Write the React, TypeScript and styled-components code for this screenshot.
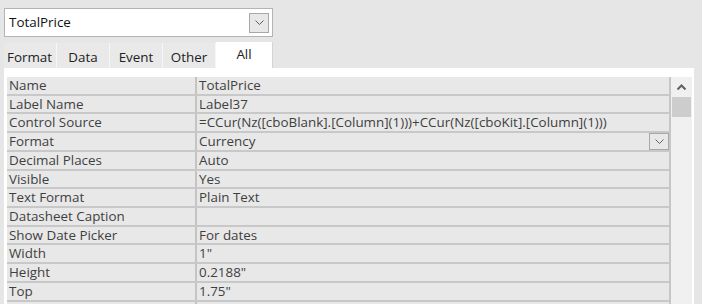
import React from "react";
import styled, { createGlobalStyle } from "styled-components";

const GlobalStyle = createGlobalStyle`
  html, body {
    margin: 0;
    padding: 0;
    height: 304px;
    overflow: hidden;
    background: #e6e6e6;
  }
  body {
    font-family: "Open Sans", "Noto Sans", sans-serif;
    font-size: 13.4px;
    color: #3f3f3f;
  }
`;

const rows: { label: string; value: string; dropdown?: boolean }[] = [
  { label: "Name", value: "TotalPrice" },
  { label: "Label Name", value: "Label37" },
  {
    label: "Control Source",
    value: "=CCur(Nz([cboBlank].[Column](1)))+CCur(Nz([cboKit].[Column](1)))",
  },
  { label: "Format", value: "Currency", dropdown: true },
  { label: "Decimal Places", value: "Auto" },
  { label: "Visible", value: "Yes" },
  { label: "Text Format", value: "Plain Text" },
  { label: "Datasheet Caption", value: "" },
  { label: "Show Date Picker", value: "For dates" },
  { label: "Width", value: "1\"" },
  { label: "Height", value: "0.2188\"" },
  { label: "Top", value: "1.75\"" },
  { label: "", value: "" },
];

const tabs = ["Format", "Data", "Event", "Other", "All"];

const Chevron = ({ up }: { up?: boolean }) => (
  <svg width="9" height="6" viewBox="0 0 9 6">
    <path
      d={up ? "M0.5 5.5 L4.5 1.5 L8.5 5.5" : "M0.5 0.5 L4.5 4.5 L8.5 0.5"}
      fill="none"
      stroke="#606060"
      strokeWidth={up ? 2 : 1}
    />
  </svg>
);

const App = () => {
  return (
    <>
      <GlobalStyle />
      <Sheet>
        <Combo>
          <ComboText>TotalPrice</ComboText>
          <DropButton $w={20} $h={20}>
            <Chevron />
          </DropButton>
        </Combo>
        <TabStrip>
          {tabs.map((t) => (
            <Tab key={t} $active={t === "All"}>
              {t}
            </Tab>
          ))}
        </TabStrip>
        <Panel>
          <Grid>
            {rows.map((r, i) => (
              <Row key={i}>
                <LabelCell>{r.label}</LabelCell>
                <ValueCell>
                  <span>{r.value}</span>
                  {r.dropdown && (
                    <DropButton $w={20} $h={17}>
                      <Chevron />
                    </DropButton>
                  )}
                </ValueCell>
              </Row>
            ))}
          </Grid>
          <ScrollBar>
            <ScrollArrow>
              <Chevron up />
            </ScrollArrow>
            <Thumb />
          </ScrollBar>
        </Panel>
      </Sheet>
    </>
  );
};

const Sheet = styled.div`
  padding: 8px 8px 0 4px;
  display: flex;
  flex-direction: column;
`;

const Combo = styled.div`
  box-sizing: border-box;
  width: 269px;
  height: 29px;
  background: #fff;
  border: 1px solid #b4b4b4;
  display: flex;
  align-items: center;
  justify-content: space-between;
  padding: 0 3px 0 4px;
  color: #111;
  font-size: 13.4px;
`;

const ComboText = styled.span`
  padding-bottom: 1px;
`;

const DropButton = styled.div<{ $w: number; $h: number }>`
  box-sizing: border-box;
  width: ${(p) => p.$w}px;
  height: ${(p) => p.$h}px;
  border: 1px solid #a8a8a8;
  background: #e8e8e8;
  display: flex;
  align-items: center;
  justify-content: center;
  flex-shrink: 0;
`;

const TabStrip = styled.div`
  display: flex;
  align-items: flex-end;
  margin-top: 5px;
  height: 26px;
`;

const Tab = styled.div<{ $active?: boolean }>`
  box-sizing: border-box;
  width: ${(p) => (p.$active ? 57 : 53)}px;
  height: ${(p) => (p.$active ? 26 : 25)}px;
  display: flex;
  align-items: ${(p) => (p.$active ? "flex-start" : "center")};
  justify-content: center;
  padding-top: ${(p) => (p.$active ? 3 : 2)}px;
  background: ${(p) => (p.$active ? "#fff" : "#e9e9e9")};
  border-right: 1px solid ${(p) => (p.$active ? "#d4d4d4" : "#f6f6f6")};
  color: #222;
  font-size: 13.4px;

  &:first-child {
    justify-content: flex-start;
    padding-left: 3px;
  }
`;

const Panel = styled.div`
  box-sizing: border-box;
  width: 690px;
  height: 236px;
  background: #fff;
  padding: 9px 2px 0 3px;
  display: flex;
  align-items: flex-start;
  overflow: hidden;
`;

const Grid = styled.div`
  flex: 1;
  display: flex;
  flex-direction: column;
  border-right: 2px solid #c6c6c6;
`;

const Row = styled.div`
  box-sizing: border-box;
  height: 18.73px;
  flex-shrink: 0;
  display: grid;
  grid-template-columns: 190px 1fr;
  background: #e8e8e8;
  border-bottom: 2px solid #c8c8c8;
`;

const LabelCell = styled.div`
  padding-left: 2px;
  line-height: 17px;
  border-right: 2px solid #c4c4c4;
  white-space: nowrap;
`;

const ValueCell = styled.div`
  display: flex;
  align-items: flex-start;
  justify-content: space-between;
  padding-left: 2px;
  line-height: 17px;
  white-space: nowrap;
  overflow: hidden;
`;

const ScrollBar = styled.div`
  width: 21px;
  height: 236px;
  background: #f0f0f0;
  display: flex;
  flex-direction: column;
  align-items: center;
`;

const ScrollArrow = styled.div`
  height: 20px;
  display: flex;
  align-items: center;
  justify-content: center;
`;

const Thumb = styled.div`
  width: 19px;
  height: 20px;
  background: #cdcdcd;
`;

export default App;
